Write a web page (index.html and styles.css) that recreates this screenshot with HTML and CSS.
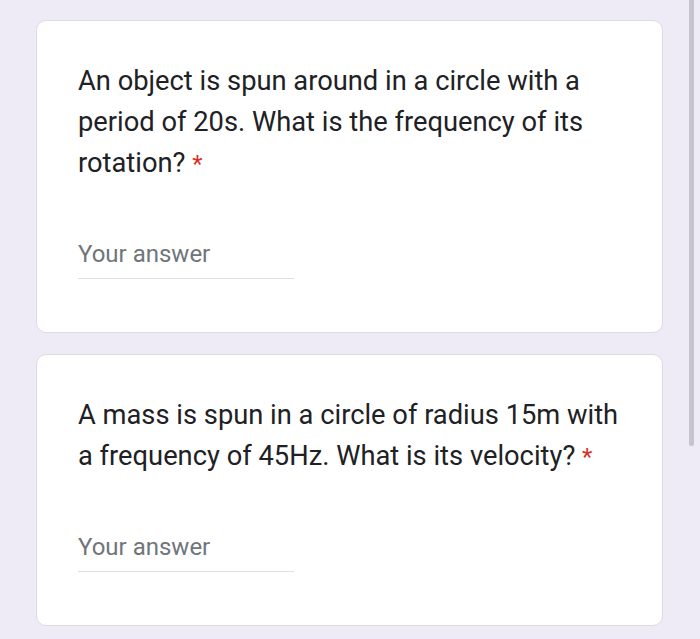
FILE: index.html
```html
<!DOCTYPE html>
<html>
<head>
<meta charset="utf-8">
<link rel="stylesheet" href="styles.css">
</head>
<body>
<div class="page">
  <div class="card">
    <div class="question">An object is spun around in a circle with a period of 20s. What is the frequency of its rotation? <span class="req">*</span></div>
    <div class="answer">Your answer</div>
  </div>
  <div class="card">
    <div class="question">A mass is spun in a circle of radius 15m with a frequency of 45Hz. What is its velocity? <span class="req">*</span></div>
    <div class="answer">Your answer</div>
  </div>
</div>
<div class="scrollbar"></div>
</body>
</html>
```
FILE: styles.css
```css
html, body {
  margin: 0;
  padding: 0;
  height: 639px;
  overflow: hidden;
  background: #eeeaf6;
}
.page {
  padding: 20px 0 0 36px;
  width: 627px;
  display: flex;
  flex-direction: column;
  gap: 21px;
  font-family: Roboto, "Liberation Sans", sans-serif;
}
.card {
  background: #ffffff;
  border: 1px solid #dcdae2;
  border-radius: 10px;
  padding: 40px 30px 53px 41px;
}
.question {
  font-size: 27.3px;
  line-height: 41px;
  color: #202124;
}
.req {
  color: #d93025;
  font-size: 24px;
}
.answer {
  margin-top: 55px;
  width: 216px;
  font-size: 24px;
  line-height: 28px;
  color: #70757a;
  padding-bottom: 10px;
  border-bottom: 1px solid #e0e0e0;
}
.scrollbar {
  position: absolute;
  left: 689px;
  top: 0;
  width: 5px;
  height: 446px;
  background: #c6c3cc;
  border-radius: 0 0 3px 3px;
}
```
